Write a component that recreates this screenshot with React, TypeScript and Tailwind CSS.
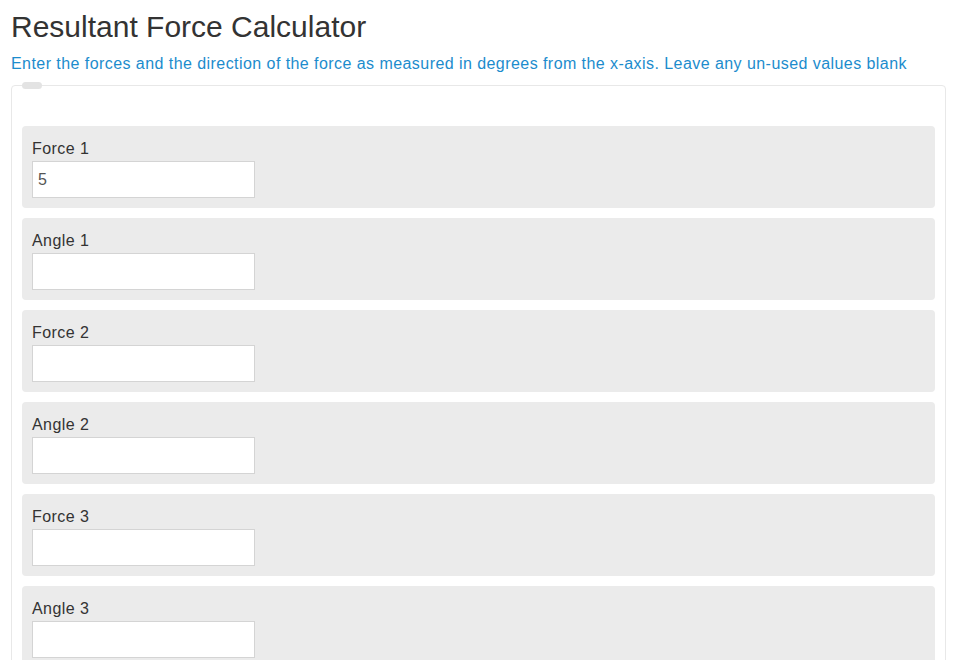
import { useState } from "react";

// ── Fields ───────────────────────────────────────────────────

const FIELDS = [
  { id: "force1", label: "Force 1", initial: "5" },
  { id: "angle1", label: "Angle 1", initial: "" },
  { id: "force2", label: "Force 2", initial: "" },
  { id: "angle2", label: "Angle 2", initial: "" },
  { id: "force3", label: "Force 3", initial: "" },
  { id: "angle3", label: "Angle 3", initial: "" },
];

export default function App() {
  const [values, setValues] = useState<Record<string, string>>(
    Object.fromEntries(FIELDS.map((f) => [f.id, f.initial]))
  );

  return (
    <div className="min-h-screen bg-white px-[11px] pt-[9px] font-['Liberation_Sans',Arial,sans-serif] text-[#333]">
      <h1 className="text-[30px] leading-[36px] text-[#333]">Resultant Force Calculator</h1>
      <p className="mt-[9px] text-[16px] leading-[20px] tracking-[0.44px] text-[#1c8ccd]">
        Enter the forces and the direction of the force as measured in degrees from the x-axis. Leave any un-used
        values blank
      </p>

      {/* ── Form panel ──────────────────────────────────── */}
      <div className="relative mt-[11px] w-[935px] rounded-[4px] border border-[#e8e8e8] px-[10px] pt-[40px]">
        <div className="absolute left-[10px] top-[-4px] h-[7px] w-[20px] rounded-full bg-[#e3e3e3]" />
        <div className="flex flex-col gap-[10px]">
          {FIELDS.map((f) => (
            <div key={f.id} className="h-[82px] rounded-[4px] bg-[#ebebeb] px-[10px] pt-[12px]">
              <label htmlFor={f.id} className="block text-[16px] leading-[22px] tracking-[0.45px] text-[#333]">
                {f.label}
              </label>
              <input
                id={f.id}
                type="text"
                value={values[f.id]}
                onChange={(e) => setValues({ ...values, [f.id]: e.target.value })}
                className="mt-[1px] block h-[37px] w-[223px] border border-[#d4d4d4] bg-white px-[5px] text-[16px] text-[#555] outline-none"
              />
            </div>
          ))}
        </div>
      </div>
    </div>
  );
}
